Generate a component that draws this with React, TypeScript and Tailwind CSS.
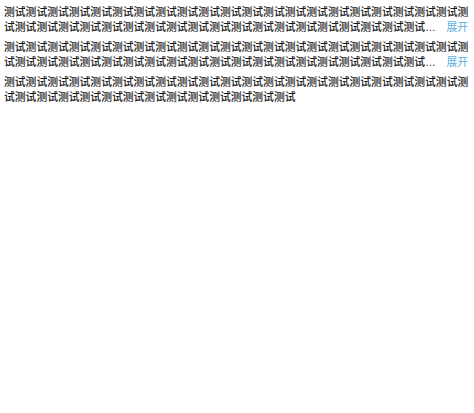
import React from "react";

const longText = "测试".repeat(60);
const shortText = "测试".repeat(35);

function Ellipsis({ body, expandable }: { body: string; expandable: boolean }) {
  if (!expandable) {
    return <p className="mb-[5px]">{body}</p>;
  }
  return (
    <div className="mb-[5px] flex">
      <div className="line-clamp-2 before:float-right before:h-[calc(100%-15px)] before:content-['']">
        <button className="float-right clear-both ml-[7px] mr-[2px] font-normal text-[#5db0e3]">展开</button>
        {body}
      </div>
    </div>
  );
}

export default function App() {
  return (
    <div
      className="min-h-[413px] bg-white px-[4px] pt-[5px] text-[10.8px] leading-[15px] font-medium text-[#1a1a1a]"
      style={{ fontFamily: '"Liberation Sans", "Noto Sans CJK SC", sans-serif' }}
    >
      <Ellipsis body={longText} expandable />
      <Ellipsis body={longText} expandable />
      <Ellipsis body={shortText} expandable={false} />
    </div>
  );
}
